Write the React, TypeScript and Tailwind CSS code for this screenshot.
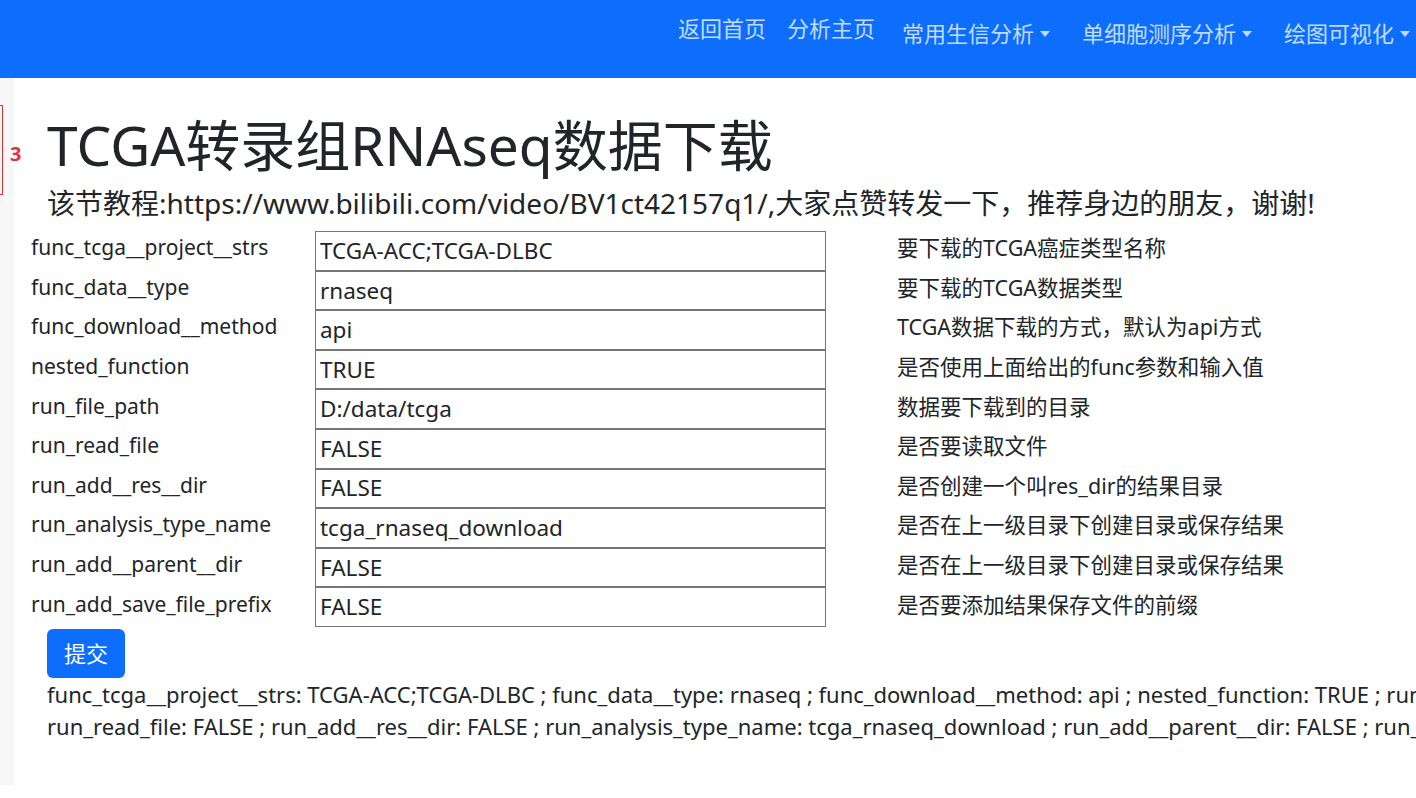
import React from "react";

const font = { fontFamily: '"Noto Sans", "Noto Sans CJK SC", sans-serif' };

const params = [
  { name: "func_tcga__project__strs", value: "TCGA-ACC;TCGA-DLBC", desc: "要下载的TCGA癌症类型名称" },
  { name: "func_data__type", value: "rnaseq", desc: "要下载的TCGA数据类型" },
  { name: "func_download__method", value: "api", desc: "TCGA数据下载的方式，默认为api方式" },
  { name: "nested_function", value: "TRUE", desc: "是否使用上面给出的func参数和输入值" },
  { name: "run_file_path", value: "D:/data/tcga", desc: "数据要下载到的目录" },
  { name: "run_read_file", value: "FALSE", desc: "是否要读取文件" },
  { name: "run_add__res__dir", value: "FALSE", desc: "是否创建一个叫res_dir的结果目录" },
  { name: "run_analysis_type_name", value: "tcga_rnaseq_download", desc: "是否在上一级目录下创建目录或保存结果" },
  { name: "run_add__parent__dir", value: "FALSE", desc: "是否在上一级目录下创建目录或保存结果" },
  { name: "run_add_save_file_prefix", value: "FALSE", desc: "是否要添加结果保存文件的前缀" },
];

function Caret() {
  return <span className="ml-[6px] inline-block h-0 w-0 border-x-[5px] border-t-[6px] border-x-transparent border-t-current align-middle" />;
}

function NavBar() {
  return (
    <nav className="flex h-[78px] items-start overflow-hidden whitespace-nowrap bg-[#0d6efd] pl-[678px] text-[22px] text-white/75">
      <a className="mt-[12px] mr-[21px]">返回首页</a>
      <a className="mt-[12px] mr-[27px]">分析主页</a>
      <a className="mt-[17px] mr-[32px] flex items-center">常用生信分析<Caret /></a>
      <a className="mt-[17px] mr-[32px] flex items-center">单细胞测序分析<Caret /></a>
      <a className="mt-[17px] flex items-center">绘图可视化<Caret /></a>
    </nav>
  );
}

export default function App() {
  const line1 = params.slice(0, 5).map((p) => `${p.name}: ${p.value}`).join(" ; ") + " ;";
  const line2 = params.slice(5).map((p) => `${p.name}: ${p.value}`).join(" ; ");

  return (
    <div className="h-[798px] w-[1416px] overflow-hidden bg-white text-[#212529]" style={font}>
      <NavBar />
      <div className="flex h-[707px]">
        {/* left sidebar strip */}
        <div className="w-[14px] shrink-0 bg-[#f7f7f7] pt-[27px]">
          <div className="relative h-[90px] w-[3px] border border-l-0 border-[#d33]">
            <span className="absolute left-[10px] top-[38px] text-[20px] font-bold leading-none text-[#dc3545]">3</span>
          </div>
        </div>

        <div className="min-w-0 flex-1">
          <h1 className="ml-[33px] mt-[28px] text-[55px] leading-[78px] whitespace-nowrap">TCGA转录组RNAseq数据下载</h1>
          <p className="ml-[33px] text-[28px] leading-[38px] whitespace-nowrap">
            该节教程:https://www.bilibili.com/video/BV1ct42157q1/,大家点赞转发一下，推荐身边的朋友，谢谢!
          </p>

          <div className="mt-[9px] flex flex-col">
            {params.map((p) => (
              <div key={p.name} className="flex h-[39.6px] items-center">
                <div className="w-[301px] shrink-0 pl-[17px] pb-[6px] text-[21px] leading-none">{p.name}</div>
                <div className="flex h-full w-[511px] shrink-0 items-center border border-[#767676] px-[4px] text-[22.5px]">
                  {p.value}
                </div>
                <div className="pl-[71px] pb-[5px] text-[21.5px] whitespace-nowrap">{p.desc}</div>
              </div>
            ))}
          </div>

          <button className="ml-[33px] mt-[2px] h-[49px] w-[78px] rounded-[6px] bg-[#0d6efd] text-[22px] text-white">提交</button>

          <div className="ml-[33px] mt-0 whitespace-nowrap text-[22px] leading-[32px]">
            <div>{line1}</div>
            <div>{line2}</div>
          </div>
        </div>
      </div>
    </div>
  );
}
